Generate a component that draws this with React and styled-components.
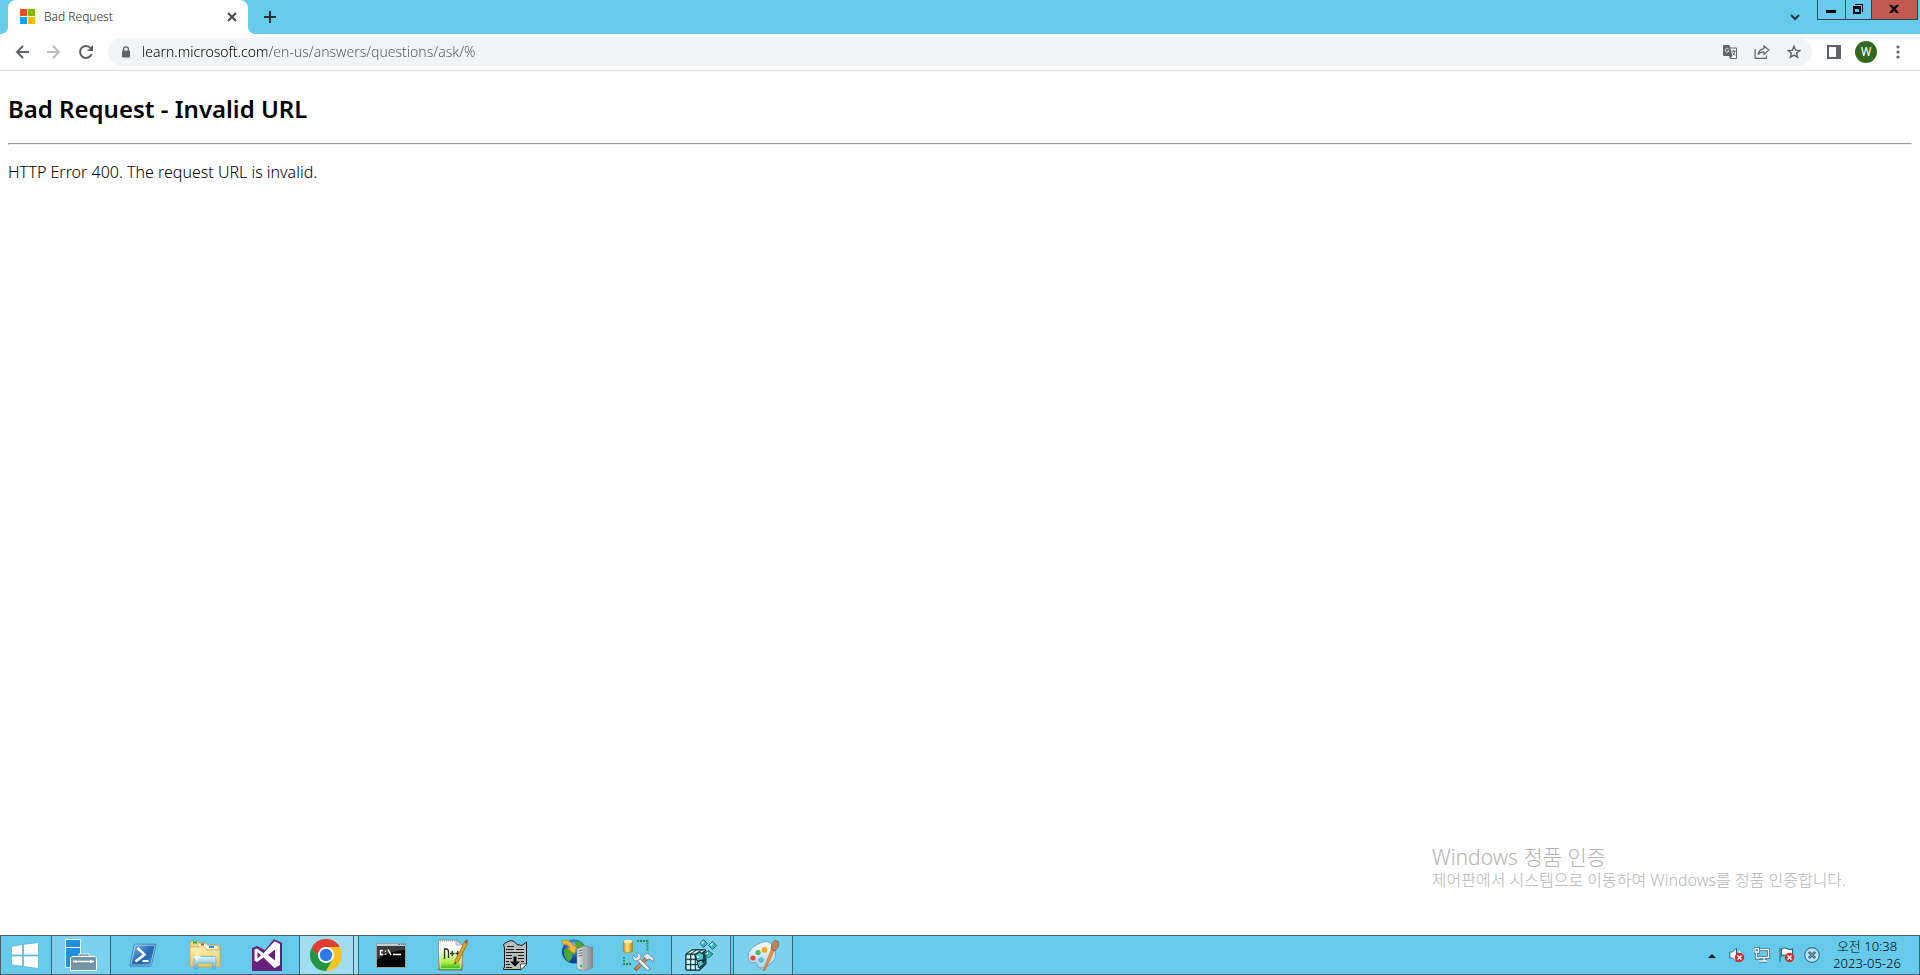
import React from 'react';
import styled, { createGlobalStyle, css } from 'styled-components';

const sky = '#66cbea';
const ink = '#5f6368';
const uiFont = '"Noto Sans", "Noto Sans CJK KR", sans-serif';

const GlobalStyle = createGlobalStyle`
  *, *::before, *::after { box-sizing: border-box; }
  body { margin: 0; background: #fff; font-family: ${uiFont}; }
  button { margin: 0; padding: 0; border: 0; background: none; font: inherit; color: inherit; }
  svg { display: block; flex: none; }
`;

const Screen = styled.div`
  display: flex;
  flex-direction: column;
  min-height: 100vh;
`;

/* ---------- Browser frame ---------- */

const TabStrip = styled.header`
  display: flex;
  align-items: flex-start;
  height: 34px;
  padding: 0 2px 0 8px;
  background: ${sky};
`;

const Tab = styled.div`
  position: relative;
  display: flex;
  align-items: center;
  width: 240px;
  height: 34px;
  padding: 0 8px 1px 12px;
  border-radius: 8px 8px 0 0;
  background: #fff;

  &::before, &::after {
    content: '';
    position: absolute;
    bottom: 0;
    width: 8px;
    height: 8px;
  }
  &::before {
    left: -8px;
    background: radial-gradient(circle at 0 0, ${sky} 8px, #fff 8px);
  }
  &::after {
    right: -8px;
    background: radial-gradient(circle at 100% 0, ${sky} 8px, #fff 8px);
  }
`;

const TabTitle = styled.span`
  flex: 1;
  margin-left: 9px;
  font-size: 12px;
  font-weight: 300;
  line-height: 16px;
  color: #25282b;
`;

const IconButton = styled.button`
  display: flex;
  align-items: center;
  justify-content: center;
  width: ${(p) => p.$size || 32}px;
  height: ${(p) => p.$size || 32}px;
  color: ${(p) => p.$color || ink};
`;

const Spacer = styled.div`
  flex: 1;
`;

const TabTools = styled.div`
  display: flex;
  padding-top: 1px;
  margin-left: ${(p) => p.$left || 0}px;
  margin-right: ${(p) => p.$right || 0}px;
`;

const WindowControls = styled.div`
  display: flex;
  height: 20px;
  border: 1px solid #2d4650;
  border-top: 0;
`;

const WindowButton = styled.button`
  display: flex;
  align-items: center;
  justify-content: center;
  width: ${(p) => p.$width}px;
  padding-right: 1px;
  padding-bottom: 1px;
  background: ${(p) => (p.$danger ? '#c35a50' : sky)};

  & + & { border-left: 1px solid #2d4650; }
`;

const Toolbar = styled.nav`
  display: flex;
  align-items: center;
  height: 37px;
  padding: 0 6px;
  border-bottom: 1px solid #d9dadc;
  background: #fff;
`;

const AddressBar = styled.div`
  display: flex;
  align-items: center;
  flex: 1;
  height: 28px;
  margin: 0 6px;
  padding: 0 2px 0 13px;
  border-radius: 14px;
  background: #f1f3f4;
`;

const AddressInput = styled.input`
  flex: 1;
  min-width: 0;
  height: 24px;
  margin-left: 11px;
  padding: 0;
  border: 0;
  outline: 0;
  font: 300 14px/24px ${uiFont};
  color: transparent;
  background: linear-gradient(90deg, #000 125px, #505458 125px);
  background-clip: text;
  -webkit-background-clip: text;
`;

const Avatar = styled.span`
  display: flex;
  align-items: center;
  justify-content: center;
  width: 22px;
  height: 22px;
  border-radius: 50%;
  background: #33691e;
  color: #fff;
  font: 400 12px/22px Roboto, sans-serif;
`;

/* ---------- Page content ---------- */

const Page = styled.main`
  position: relative;
  flex: 1;
  padding: 0 8px;
  color: #000;
`;

const Heading = styled.h2`
  margin: 0;
  padding: 22px 0 18px;
  font-size: 24px;
  font-weight: 600;
  line-height: 32px;
`;

const Rule = styled.hr`
  margin: 0;
  border: 1px solid;
  border-color: #9a9a9a #eee #eee #9a9a9a;
`;

const Message = styled.p`
  margin: 16px 0;
  font-size: 16px;
  font-weight: 300;
  line-height: 22px;
`;

const Watermark = styled.aside`
  position: absolute;
  right: 74px;
  bottom: 45px;
  color: #b4b4b4;
  font-weight: 300;
`;

const WatermarkTitle = styled.div`
  font-size: 21px;
  line-height: 26px;
`;

const WatermarkText = styled.div`
  font-size: 16px;
  line-height: 20px;
`;

/* ---------- Taskbar ---------- */

const Taskbar = styled.footer`
  display: flex;
  height: 40px;
  border: 1px solid #4f5f66;
  background: ${sky};
`;

const StartButton = styled.button`
  display: flex;
  align-items: center;
  justify-content: center;
  width: 50px;
  padding-right: 2px;
`;

const AppList = styled.div`
  display: flex;
  gap: 2px;
`;

const AppButton = styled.button`
  display: flex;
  align-items: center;
  justify-content: center;
  width: 60px;
  height: 38px;
  ${(p) => p.$open && css`
    border: solid #3b6778;
    border-width: 0 1px;
    background: #7bd2ee;
  `}
  ${(p) => p.$active && css`
    padding-right: 6px;
    background: linear-gradient(90deg, #a1ddf2 53px, #3b6778 53px, #3b6778 54px, #a1ddf2 54px);
  `}
`;

const Tray = styled.div`
  display: flex;
  align-items: center;
  margin-left: auto;
`;

const TrayButton = styled.button`
  display: flex;
  align-items: center;
  justify-content: center;
  width: 25px;
  height: 38px;
`;

const Clock = styled.time`
  width: 95px;
  padding-right: 9px;
  text-align: center;
  font-size: 13px;
  font-weight: 300;
  line-height: 17px;
  color: #000;
`;

/* ---------- Browser icons ---------- */

const MicrosoftLogo = () => (
  <svg width="15" height="15" viewBox="0 0 15 15">
    <path fill="#f8501f" d="M0 0h7v7H0z" />
    <path fill="#7eb900" d="M8 0h7v7H8z" />
    <path fill="#00a3ee" d="M0 8h7v7H0z" />
    <path fill="#ffb800" d="M8 8h7v7H8z" />
  </svg>
);

const Stroke = ({ size, d, width = 2 }) => (
  <svg width={size} height={size} viewBox={`0 0 ${size} ${size}`}>
    <path d={d} fill="none" stroke="currentColor" strokeWidth={width} />
  </svg>
);

const ReloadIcon = () => (
  <svg width="16" height="16" viewBox="0 0 16 16">
    <path d="M12.800 4.200A6 6 0 1 0 13.700 10" fill="none" stroke="currentColor" strokeWidth="2" />
    <path d="M15 1v6H9z" fill="currentColor" />
  </svg>
);

const LockIcon = () => (
  <svg width="10" height="12" viewBox="0 0 10 12">
    <path d="M2.600 5V3.200a2.400 2.400 0 0 1 4.800 0V5" fill="none" stroke={ink} strokeWidth="1.300" />
    <rect x="1" y="4.400" width="8" height="7" rx="1" fill={ink} />
  </svg>
);

const TranslateIcon = () => (
  <svg width="14" height="14" viewBox="0 0 14 14">
    <path d="M6 3h7.500v10.500H7" fill="#f8f9fa" stroke={ink} />
    <path d="M1 0h5.400l3 11H1a1 1 0 0 1-1-1V1a1 1 0 0 1 1-1z" fill={ink} />
    <path d="M9.400 11L7 13.800 6.200 11z" fill={ink} />
    <path d="M5.800 4.300a2 2 0 1 0 .2 1.500H4.300" fill="none" stroke="#e3e5e6" />
    <path d="M8.600 6.200h4.200M10.700 5v1.200M12 6.400c-.4 1.800-1.200 2.900-2.400 4M9.600 7.600c.6 1.100 1.600 2 2.800 2.800" fill="none" stroke={ink} />
  </svg>
);

const ShareIcon = () => (
  <svg width="16" height="14" viewBox="0 0 16 14" fill="none" stroke="currentColor" strokeWidth="1.200">
    <path d="M1.100 4v9.300h11.300V10.500" />
    <path d="M10 1l4.900 4.100L10 9.200V6.800c-2.700 0-4.600.9-6 2.900.5-3 2.300-5.500 6-6.100z" />
  </svg>
);

const StarIcon = () => (
  <svg width="14" height="14" viewBox="0 0 14 14">
    <path d="M7 1.300l1.600 3.900 4.200.3-3.200 2.700 1 4.100L7 10.100l-3.600 2.200 1-4.100L1.200 5.500l4.200-.3z" fill="none" stroke="currentColor" strokeWidth="1.400" />
  </svg>
);

const SidePanelIcon = () => (
  <svg width="14" height="14" viewBox="0 0 14 14">
    <path fill="currentColor" fillRule="evenodd" d="M0 0h14v14H0zM2 2v10h7V2z" />
  </svg>
);

const DotsIcon = () => (
  <svg width="4" height="14" viewBox="0 0 4 14" fill="currentColor">
    <circle cx="2" cy="2" r="1.600" />
    <circle cx="2" cy="7" r="1.600" />
    <circle cx="2" cy="12" r="1.600" />
  </svg>
);

const MinimizeIcon = () => (
  <svg width="10" height="10" viewBox="0 0 10 10"><path d="M0 6h10v3H0z" /></svg>
);

const RestoreIcon = () => (
  <svg width="10" height="10" viewBox="0 0 10 10">
    <path fillRule="evenodd" d="M0 2h8v8H0zM2 5v3h4V5zM2 0h8v8H9V1H2z" />
  </svg>
);

const CloseIcon = () => (
  <svg width="10" height="8" viewBox="0 0 10 8">
    <path d="M0 0h3l2 2.300L7 0h3L6.700 4 10 8H7L5 5.700 3 8H0l3.300-4z" />
  </svg>
);

/* ---------- Taskbar icons ---------- */

const WindowsLogo = () => (
  <svg width="28" height="27" viewBox="0 0 28 27" fill="#fff" stroke="#4ea6c2" strokeWidth="0.600">
    <path d="M.5 4.200L11.500 2.600V13H.5zM12.500 2.400L27.500.5V13H12.500zM.5 14H11.500v10.300L.5 22.800zM12.500 14h15v12.400l-15-2z" />
  </svg>
);

const ServerManagerIcon = () => (
  <svg width="32" height="32" viewBox="0 0 32 32">
    <path d="M.5.500h15v28H.5z" fill="#2190dc" stroke="#e9f8fd" />
    <path d="M1 8.500h14" stroke="#e9f8fd" />
    <path d="M15 18v-2h8v2" fill="none" stroke="#fff" strokeWidth="3" />
    <path d="M15 18v-2h8v2" fill="none" stroke="#7195a9" strokeWidth="1.500" />
    <path d="M7 17.500h23l1.500 1.500v12.500h-26V19z" fill="#7195a9" stroke="#fff" />
    <path d="M8 22.500h21M11 21v3M26 21v3" stroke="#fff" strokeWidth="1.300" />
  </svg>
);

const PowerShellIcon = () => (
  <svg width="28" height="24" viewBox="0 0 28 24">
    <defs>
      <linearGradient id="shell" x1="0" y1="0" x2="1" y2="1">
        <stop offset="0" stopColor="#8accf0" /><stop offset=".45" stopColor="#2f74bb" /><stop offset=".6" stopColor="#2467b0" /><stop offset="1" stopColor="#4a9be0" />
      </linearGradient>
    </defs>
    <path d="M6.500 1h19.500q1.500 0 1 1.500L22.500 22q-.4 1.200-1.700 1.200H2Q.6 23.200 1 21.800L5 2.200Q5.300 1 6.500 1z" fill="url(#shell)" stroke="#3d86b5" strokeWidth=".8" />
    <path d="M6.800 2.200h18.700q.7 0 .5.800L21.700 21q-.2 1-1 1H2.800q-.9 0-.7-.9L6 3q.2-.8.800-.8z" fill="none" stroke="#a8daf4" strokeWidth=".8" />
    <path d="M8.500 5l7 6.600L6.500 18.500" fill="none" stroke="#fff" strokeWidth="2.600" />
    <path d="M13.500 18h6" stroke="#fff" strokeWidth="2" />
  </svg>
);

const ExplorerIcon = () => (
  <svg width="32" height="30" viewBox="0 0 32 30">
    <defs>
      <linearGradient id="folder" x1="0" y1="0" x2="0" y2="1">
        <stop offset="0" stopColor="#fff1b0" /><stop offset="1" stopColor="#e8c35e" />
      </linearGradient>
      <linearGradient id="glass" x1="0" y1="0" x2="0" y2="1">
        <stop offset="0" stopColor="#d9f4ff" /><stop offset="1" stopColor="#55aedb" />
      </linearGradient>
    </defs>
    <path d="M1 3q0-2 2-2h6l1.500 2H17l1.500 2h11q1.500 0 1.500 1.500V26H1z" fill="#eed68a" stroke="#b89549" strokeWidth=".7" />
    <path d="M4 1.500h4v2H4z" fill="#15b32c" />
    <path d="M10 4h7l2 2h9v3H10z" fill="#fff7d8" />
    <path d="M12 3.500h3v2h-3z" fill="#d64b29" />
    <path d="M20 6h5v2h-5z" fill="#238dd6" />
    <path d="M1 7h14l3 3h13v17H1z" fill="url(#folder)" stroke="#c9a44f" strokeWidth=".7" />
    <path d="M5 29V18q0-1.500 1.500-1.500h19Q27 16.500 27 18v11h-3.500v-6h-15v6z" fill="url(#glass)" stroke="#5caed3" strokeWidth=".7" />
    <path d="M8 11l.8 4.600L13 17l-4.200 1L8 22l-1-4-4-1 4-1.400z" fill="#fff" />
  </svg>
);

const VisualStudioIcon = () => (
  <svg width="30" height="32" viewBox="0 0 30 32">
    <path d="M0 9l5-2 8 4L22 0l8 4v28H0z" fill="#68217a" />
    <path d="M22.500 2.300L28 5v21l-5.500 3L11.500 18.500 5 23l-2.500-1.200V10.500L5 9.500l6.500 4.700z" fill="#fff" />
    <path d="M23 10.500v11L16 16zM5.500 13v6.500L9 16.300z" fill="#68217a" />
  </svg>
);

const ChromeIcon = () => (
  <svg width="32" height="32" viewBox="0 0 32 32">
    <path d="M16 8h13.860A16 16 0 0 1 16 32l6.930-12z" fill="#fcc31e" />
    <path d="M2.140 8l6.930 12L16 24l6.500-3.200L16 32A16 16 0 0 1 2.140 8z" fill="#229544" />
    <path d="M2.140 8l6.930 12H16v-8z" fill="#229544" />
    <path d="M2.140 8A16 16 0 0 1 29.860 8H16q-6 0-7.600 6l-2 1.400z" fill="#e33b2e" />
    <circle cx="16" cy="16" r="8" fill="#fff" />
    <circle cx="16" cy="16" r="6.200" fill="#3079ea" />
  </svg>
);

const PromptIcon = () => (
  <svg width="30" height="25" viewBox="0 0 30 25">
    <path d="M.5.500h29v24H.5z" fill="#050505" stroke="#98a0a4" />
    <path d="M1 1h28v2H1z" fill="#c9d0d3" />
    <path d="M22 1.500h2M25 1.500h1.500M27 1.500h1.500" stroke="#4f78b0" />
    <path d="M1 3h28v4Q12 8 1 17z" fill="#3a3a3a" />
    <path d="M7 7.500H4.500v4H7M9.500 7.500v1.200M9.500 10.500v1.200M12 6.500l3 5.500M17 11.500h8" fill="none" stroke="#fff" strokeWidth="1.400" />
  </svg>
);

const NotepadIcon = () => (
  <svg width="30" height="32" viewBox="0 0 30 32">
    <defs>
      <linearGradient id="page" x1="0" y1="0" x2="0" y2="1">
        <stop offset=".3" stopColor="#fff" /><stop offset=".75" stopColor="#a6ec37" /><stop offset="1" stopColor="#1aa51c" />
      </linearGradient>
    </defs>
    <path d="M.5 1h18l6 5v25.500H.5z" fill="url(#page)" stroke="#8b9898" />
    <path d="M2.500 3.500v26h20v-22" fill="none" stroke="#dfe7df" strokeWidth=".7" />
    <path d="M2 2h16" stroke="#87918c" strokeWidth="1" strokeDasharray="1 1" />
    <path d="M18 1v5h6z" fill="#d3dcdf" stroke="#879398" strokeWidth=".6" />
    <path d="M6.500 20V10h1.500q2.500 0 2.500 3v6M12 14.500h4.500M14.300 12v5M17.500 14.500h4.500M19.800 12v5" fill="none" stroke="#25331f" strokeWidth="1.300" />
    <path d="M16.500 25.500l1-5L26.500 3l3 1.700-9 17.500z" fill="#e4a326" stroke="#976019" strokeWidth=".7" />
    <path d="M26.500 3L28 .5l2 1-1 3.200z" fill="#ad4a48" />
    <path d="M16.500 25.500l.5-2.500 1 .8z" fill="#333" />
  </svg>
);

const ScrollIcon = () => (
  <svg width="24" height="31" viewBox="0 0 24 31">
    <path d="M.5 4.500L4 2l4-1.500 3 1 3 3 5 1 4.500-3.500v22L18 29.500H.5V28l1-.5V8z" fill="#b9bcbc" stroke="#15191a" />
    <path d="M4 6.500h7M3 9.500h8M13 9.500h8M3 12.500h18M3 15.500h6M15 15.500h6M3 18.500h6M15 18.500h6M3 21.500h3M18 21.500h3M3 24.500h4M3 27.500h6" stroke="#161a1b" strokeWidth="1" />
    <path d="M10.500 16.500h3v5H17l-5 5-5-5h3.500z" />
    <path d="M17.500 30v-6H24z" fill="#fff" stroke="#222" strokeWidth=".7" />
  </svg>
);

const WebServerIcon = () => (
  <svg width="32" height="32" viewBox="0 0 32 32">
    <defs>
      <radialGradient id="globe" cx=".5" cy=".3"><stop offset="0" stopColor="#a9ddff" /><stop offset=".5" stopColor="#287cd5" /><stop offset="1" stopColor="#10429a" /></radialGradient>
      <linearGradient id="tower"><stop offset="0" stopColor="#e6e8e9" /><stop offset="1" stopColor="#7b858c" /></linearGradient>
    </defs>
    <circle cx="13" cy="12.500" r="12" fill="url(#globe)" />
    <path d="M3 10q6-2 9 3l-1 6-3 4q-4-3-5-7zM14 2q7 0 9 5l-4 4-5-3zM16 14l6-2-1 6-4 2z" fill="#48a935" />
    <path d="M1 1.500q9-1.500 11.500 6L16 6.500 13.500 15 6.500 9.500l2.500-.8Q7 5 2 5.500z" fill="#fbb936" stroke="#c77d13" strokeWidth=".7" />
    <path d="M16 10l7-3 9 1.500v20L23 32l-7-2.500z" fill="url(#tower)" stroke="#788187" strokeWidth=".6" />
    <path d="M23 9v22" stroke="#9aa2a6" />
    <path d="M17.500 12l4-1M17.500 14.500l4-.7M17.500 17l4-.5" stroke="#697379" />
    <circle cx="20" cy="27" r="1.200" fill="#3ebd38" />
  </svg>
);

const AdminToolsIcon = () => (
  <svg width="32" height="32" viewBox="0 0 32 32">
    <defs><linearGradient id="drum"><stop offset="0" stopColor="#c98a16" /><stop offset=".4" stopColor="#ffe591" /><stop offset="1" stopColor="#bd8110" /></linearGradient></defs>
    <path d="M.5 2.500q4.500-2.500 9 0v10q-4.500 3-9 0z" fill="url(#drum)" stroke="#a7780d" strokeWidth=".6" />
    <ellipse cx="5" cy="2.500" rx="4.300" ry="1.700" fill="#ffefa9" />
    <path d="M14 2h10.500v10M1 18v7h8" fill="none" stroke="#36833d" strokeWidth="1.800" strokeDasharray="2 1" />
    <path d="M12 31L25 18" stroke="#9d602a" strokeWidth="3.600" />
    <path d="M13 30L25 18" stroke="#e49a50" strokeWidth="1.500" />
    <path d="M20 17l4-3 7 5-1 4-3-3-3 1z" fill="#dce6ec" stroke="#667c8b" strokeWidth=".8" />
    <path d="M15 20l11 11" stroke="#647d90" strokeWidth="4" />
    <path d="M14.500 19.500L25.500 30.500" stroke="#e5edf2" strokeWidth="2.500" />
    <path d="M10 16l3 3 2-2-2-3q5 0 5 4-1 4-5 4-4-1-3-6z" fill="#dfe8ee" stroke="#667f91" strokeWidth=".7" />
  </svg>
);

const RegistryIcon = () => (
  <svg width="32" height="32" viewBox="0 0 32 32" stroke="#07191b" strokeWidth=".9">
    <path d="M1 15l6-4h14v14l-6 6H1z" fill="#138a91" />
    <path d="M1 15h14v16H1z" fill="#a5eaee" />
    <path d="M1 20.300h14M1 25.600h14M5.700 15v16M10.300 15v16" />
    <path d="M1 15l6-4h14l-5 4z" fill="#c9f7f8" />
    <path d="M5.500 15l6-4M10.500 15l6-4M17 13.500v15.500M19 12v15M15 20l6-5M15 25l6-5" fill="none" />
    <path d="M10 16l5-3 4 3-1 5-6 1zM12 23l5-2 2 4-5 4z" fill="#4cc4c9" />
    <path d="M18.500 .5l4 4-4 4-3.500-4zM27.500 2.500l4 4-4 4-4-4zM23 11.500l5 3.500-4.500 4-4-4z" fill="#31b6bc" stroke="#2b5d64" />
    <path d="M18.500 1.500v3l-2.500 0zM27.500 3.500v3h-3zM23 12.500v3l-2.500-.5zM2.500 17h2v2h-2zM7 17h2v2H7zM12 17h2v2h-2zM2.500 22h2v2h-2zM7 22h2v2H7zM2.500 27.500h2v2h-2zM7 27.500h2v2H7z" fill="#f4ffff" stroke="none" />
  </svg>
);

const PaintIcon = () => (
  <svg width="32" height="32" viewBox="0 0 32 32">
    <defs><linearGradient id="palette" x1="0" y1="0" x2="0" y2="1"><stop offset="0" stopColor="#f7fdff" /><stop offset="1" stopColor="#a5d3ed" /></linearGradient></defs>
    <path d="M11 5q11-6 16 3 5 12-5 18-5 4-10 3-2-1-2-4-1-3-4-1-5 0-5-7Q1 10 11 5z" fill="url(#palette)" stroke="#6fa5c4" />
    <circle cx="6" cy="19" r="2.600" fill="#e44c3d" />
    <circle cx="11" cy="13.500" r="2.600" fill="#56b94b" />
    <circle cx="17.500" cy="11" r="2.900" fill="#f4ad20" />
    <circle cx="14" cy="21" r="2.300" fill="#63bedf" stroke="#5c9dbf" strokeWidth=".7" />
    <path d="M16 32l8.500-22 3 1.500L18 31z" fill="#ee9137" stroke="#b86118" strokeWidth=".6" />
    <path d="M24 10q0-6 4-9l4 2q1 4-4 9z" fill="#b98959" stroke="#795436" strokeWidth=".6" />
  </svg>
);

const ErrorBadge = ({ x, y }) => (
  <g transform={`translate(${x} ${y})`}>
    <circle cx="4.500" cy="4.500" r="4.700" fill="#d12c2c" />
    <path d="M2.500 2.500l4 4M6.500 2.500l-4 4" stroke="#fff" strokeWidth="1.500" />
  </g>
);

const UpIcon = () => (
  <svg width="8" height="5" viewBox="0 0 8 5"><path d="M0 5L4 1l4 4z" fill="#101c20" /></svg>
);

const VolumeIcon = () => (
  <svg width="16" height="16" viewBox="0 0 16 16">
    <path d="M.8 5h2.700l4-4v14l-4-4H.8z" fill="#fff" stroke="#2c6478" />
    <path d="M10 4q2 2 1 5" fill="none" stroke="#fff" strokeWidth="1.200" />
    <ErrorBadge x={6} y={6} />
  </svg>
);

const NetworkIcon = () => (
  <svg width="16" height="16" viewBox="0 0 16 16" fill="none">
    <path d="M6 2.500h8.500v8H5M10 11v3M5 14h8M2.500 6v5h3M1 1.500h3.500v3.500H1z" stroke="#285e70" strokeWidth="2.800" />
    <path d="M6 2.500h8.500v8H5M10 11v3M5 14h8M2.500 6v5h3M1 1.500h3.500v3.500H1z" stroke="#fff" strokeWidth="1.400" />
  </svg>
);

const FlagIcon = () => (
  <svg width="16" height="16" viewBox="0 0 16 16">
    <path d="M1 .7v14.600M2.500 2q3-2 6 0 3 1 5 0v7q-3 1-6-.5-3-1-5 .5z" fill="#fff" stroke="#316779" strokeWidth="1.100" />
    <ErrorBadge x={6} y={6} />
  </svg>
);

const OfflineIcon = () => (
  <svg width="16" height="16" viewBox="0 0 16 16">
    <circle cx="8" cy="8" r="7.300" fill="#b8e5f3" stroke="#3b7488" strokeWidth="1.200" />
    <path d="M4.800 4.800l6.400 6.400M11.200 4.800l-6.400 6.400" stroke="#3f6b7a" strokeWidth="2.600" />
    <path d="M5.500 5.500l5 5M10.500 5.500l-5 5" stroke="#8fc0d0" strokeWidth=".7" />
  </svg>
);

const apps = [
  { name: 'Server Manager', Icon: ServerManagerIcon, open: true },
  { name: 'Windows PowerShell', Icon: PowerShellIcon },
  { name: 'File Explorer', Icon: ExplorerIcon },
  { name: 'Visual Studio', Icon: VisualStudioIcon },
  { name: 'Google Chrome', Icon: ChromeIcon, open: true, active: true },
  { name: 'Command Prompt', Icon: PromptIcon },
  { name: 'Notepad++', Icon: NotepadIcon },
  { name: 'Log viewer', Icon: ScrollIcon },
  { name: 'IIS Manager', Icon: WebServerIcon },
  { name: 'SQL Server Management Studio', Icon: AdminToolsIcon },
  { name: 'Registry Editor', Icon: RegistryIcon, open: true },
  { name: 'Paint', Icon: PaintIcon, open: true },
];

export default function App() {
  return (
    <Screen>
      <GlobalStyle />
      <TabStrip>
        <Tab>
          <MicrosoftLogo />
          <TabTitle>Bad Request</TabTitle>
          <IconButton $size={16} $color="#45494d" aria-label="Close tab">
            <Stroke size={10} d="M1 1l8 8M9 1L1 9" />
          </IconButton>
        </Tab>
        <TabTools $left={6}>
          <IconButton $color="#2b2f33" aria-label="New tab">
            <Stroke size={12} d="M6 0v12M0 6h12" />
          </IconButton>
        </TabTools>
        <Spacer />
        <TabTools $right={6}>
          <IconButton $color="#22343b" aria-label="Search tabs">
            <Stroke size={10} d="M1 3l4 4 4-4" />
          </IconButton>
        </TabTools>
        <WindowControls>
          <WindowButton $width={27} aria-label="Minimize"><MinimizeIcon /></WindowButton>
          <WindowButton $width={26} aria-label="Restore"><RestoreIcon /></WindowButton>
          <WindowButton $width={46} $danger aria-label="Close window"><CloseIcon /></WindowButton>
        </WindowControls>
      </TabStrip>

      <Toolbar aria-label="Browser toolbar">
        <IconButton aria-label="Back"><Stroke size={14} d="M14 7H2M8 1L2 7l6 6" /></IconButton>
        <IconButton $color="#babcbe" aria-label="Forward"><Stroke size={14} d="M0 7h12M6 1l6 6-6 6" /></IconButton>
        <IconButton aria-label="Reload"><ReloadIcon /></IconButton>
        <AddressBar>
          <LockIcon />
          <AddressInput
            aria-label="Address"
            spellCheck={false}
            defaultValue="learn.microsoft.com/en-us/answers/questions/ask/%"
          />
          <IconButton aria-label="Translate this page"><TranslateIcon /></IconButton>
          <IconButton aria-label="Share this page"><ShareIcon /></IconButton>
          <IconButton aria-label="Bookmark this page"><StarIcon /></IconButton>
        </AddressBar>
        <IconButton aria-label="Side panel"><SidePanelIcon /></IconButton>
        <IconButton aria-label="Profile"><Avatar>W</Avatar></IconButton>
        <IconButton aria-label="Menu"><DotsIcon /></IconButton>
      </Toolbar>

      <Page>
        <Heading>Bad Request - Invalid URL</Heading>
        <Rule />
        <Message>HTTP Error 400. The request URL is invalid.</Message>
        <Watermark>
          <WatermarkTitle>Windows 정품 인증</WatermarkTitle>
          <WatermarkText>제어판에서 시스템으로 이동하여 Windows를 정품 인증합니다.</WatermarkText>
        </Watermark>
      </Page>

      <Taskbar>
        <StartButton aria-label="Start"><WindowsLogo /></StartButton>
        <AppList>
          {apps.map(({ name, Icon, open, active }) => (
            <AppButton key={name} aria-label={name} $open={open} $active={active}><Icon /></AppButton>
          ))}
        </AppList>
        <Tray>
          <TrayButton aria-label="Show hidden icons"><UpIcon /></TrayButton>
          <TrayButton aria-label="Volume"><VolumeIcon /></TrayButton>
          <TrayButton aria-label="Network"><NetworkIcon /></TrayButton>
          <TrayButton aria-label="Action Center"><FlagIcon /></TrayButton>
          <TrayButton aria-label="Connection status"><OfflineIcon /></TrayButton>
          <Clock dateTime="2023-05-26T10:38">
            오전 10:38<br />2023-05-26
          </Clock>
        </Tray>
      </Taskbar>
    </Screen>
  );
}
